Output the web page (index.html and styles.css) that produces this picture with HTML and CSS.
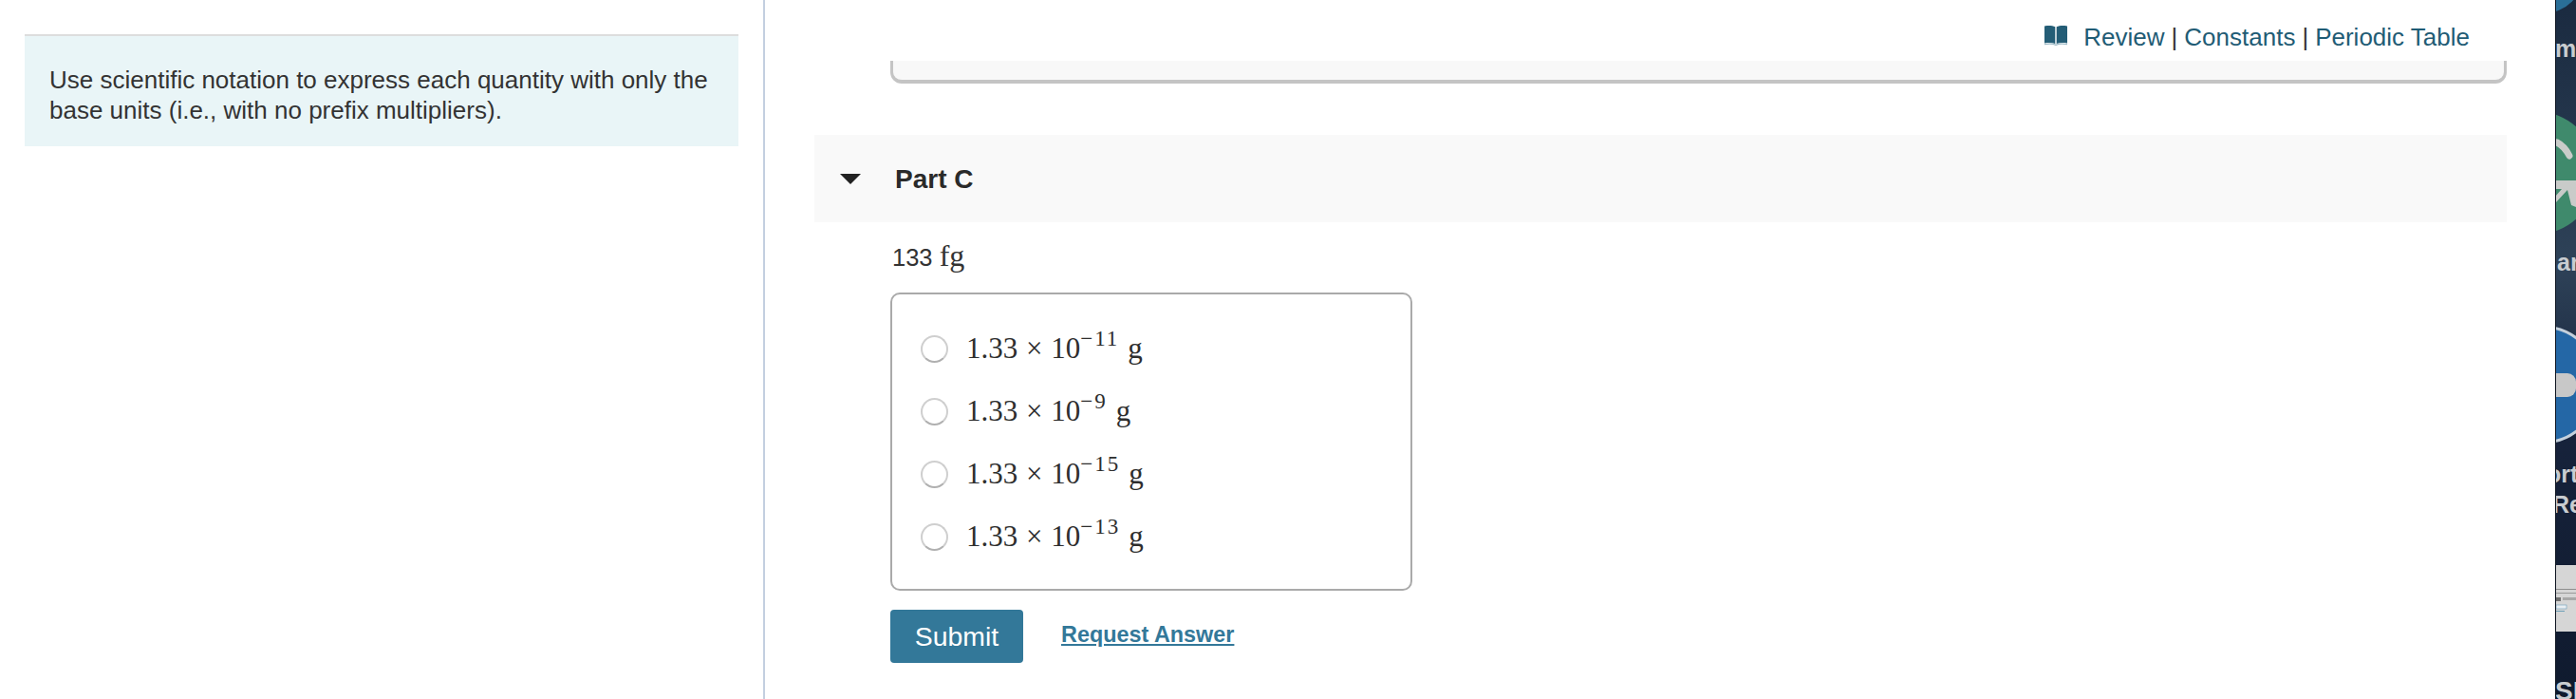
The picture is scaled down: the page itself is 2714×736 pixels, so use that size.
FILE: index.html
```html
<!DOCTYPE html>
<html lang="en">
<head>
<meta charset="utf-8">
<title>Part C</title>
<link rel="stylesheet" href="styles.css">
</head>
<body>
<div class="app">
  <aside class="intro">
    <div class="note">Use scientific notation to express each quantity with only the base units (i.e., with no prefix multipliers).</div>
  </aside>
  <main class="content">
    <nav class="links">
      <svg class="book" viewBox="0 0 24 21" width="24" height="21" aria-hidden="true">
        <path d="M0 0.5 C4 -0.2 8 -0.2 11.3 1.2 V19 C8 17.8 4 17.8 0 18.5 Z" fill="#245d76"/>
        <path d="M24 0.5 C20 -0.2 16 -0.2 12.7 1.2 V19 C16 17.8 20 17.8 24 18.5 Z" fill="#245d76"/>
        <path d="M0 19.6 C4 18.9 9 18.9 12 20.4 C15 18.9 20 18.9 24 19.6" fill="none" stroke="#9dbac6" stroke-width="1.2"/>
      </svg>
      <a class="link" href="#">Review</a><span class="sep">|</span><a class="link" href="#">Constants</a><span class="sep">|</span><a class="link" href="#">Periodic Table</a>
    </nav>
    <div class="prev-card"></div>
    <section class="part">
      <header class="part-head">
        <span class="caret"></span>
        <h2 class="part-title">Part C</h2>
      </header>
      <div class="part-body">
        <p class="quantity">133 <span class="serif">fg</span></p>
        <div class="options">
          <label class="option"><span class="radio"></span><span class="math">1.33 <span class="times">×</span> 10<span class="exp">−11</span><span class="unit">g</span></span></label>
          <label class="option"><span class="radio"></span><span class="math">1.33 <span class="times">×</span> 10<span class="exp">−9</span><span class="unit">g</span></span></label>
          <label class="option"><span class="radio"></span><span class="math">1.33 <span class="times">×</span> 10<span class="exp">−15</span><span class="unit">g</span></span></label>
          <label class="option"><span class="radio"></span><span class="math">1.33 <span class="times">×</span> 10<span class="exp">−13</span><span class="unit">g</span></span></label>
        </div>
        <div class="actions">
          <button class="submit" type="button">Submit</button>
          <a class="request" href="#">Request Answer</a>
        </div>
      </div>
    </section>
  </main>
  <div class="desktop">
    <svg class="desktop-art" viewBox="0 0 22 736" width="22" height="736" aria-hidden="true">
      <defs>
        <linearGradient id="wall" x1="0" y1="0" x2="0" y2="1">
          <stop offset="0" stop-color="#1a2a40"/>
          <stop offset="0.38" stop-color="#2e4258"/>
          <stop offset="0.6" stop-color="#17233c"/>
          <stop offset="1" stop-color="#0f1a2e"/>
        </linearGradient>
      </defs>
      <rect width="22" height="736" fill="url(#wall)"/>
      <circle cx="-12" cy="-28" r="42" fill="#2a6f98"/>
      <text class="desk-label" x="0" y="60">m</text>
      <circle cx="-21" cy="182" r="65" fill="#3f8a6c"/>
      <path d="M2 150 C8 153 12 158 15 164" fill="none" stroke="#c9ccc9" stroke-width="7" stroke-linecap="round"/>
      <path d="M0 190 H22 V218 L17 216 L13 200 L1 213 L0 207 L7 199 H0 Z" fill="#c9cbc9"/>
      <text class="desk-label" x="2" y="285">ar</text>
      <circle cx="-14" cy="405" r="61" fill="#2467a6" stroke="#c4d0dc" stroke-width="3"/>
      <rect x="-10" y="393" width="32" height="25" rx="9" fill="#c8c8c8"/>
      <text class="desk-label" x="-9" y="508">ort</text>
      <text class="desk-label" x="-3" y="540">Re</text>
      <rect y="595" width="22" height="70" fill="#d6d6d6"/>
      <rect y="620" x="1" width="21" height="1" fill="#8d8d8d"/>
      <rect y="624" x="1" width="21" height="1" fill="#9a9a9a"/>
      <rect y="629" x="1" width="5" height="4" fill="#707070"/>
      <rect y="629" x="8" width="14" height="3" fill="#a9a9a9"/>
      <rect y="637" x="1" width="11" height="4" fill="#e8eef2" stroke="#6d9fb8" stroke-width="0.6"/>
      <rect y="643" x="1" width="9" height="1" fill="#6d9fb8"/>
      <text class="desk-label desk-large" x="0" y="737">SH</text>
      <rect width="1" height="736" fill="#0d1420"/>
    </svg>
  </div>
</div>
</body>
</html>
```
FILE: styles.css
```css
* { box-sizing: border-box; }
html, body { margin: 0; padding: 0; background: #fff; }
body { font-family: "Liberation Sans", Arial, sans-serif; color: #333; }

.app { display: flex; width: 2714px; height: 736px; overflow: hidden; }

.intro {
  flex: 0 0 806px;
  padding: 36px 26px 0;
  border-right: 2px solid #c3cfe0;
}
.note {
  height: 118px;
  padding: 30px 26px 0 26px;
  background: #e9f5f7;
  border-top: 2px solid #dddddd;
  font-size: 26px;
  line-height: 32px;
}

.content { flex: 1; display: flex; flex-direction: column; min-width: 0; }

.links {
  height: 64px;
  padding: 0 90px 10px 0;
  display: flex;
  justify-content: flex-end;
  align-items: flex-end;
  font-size: 26px;
  line-height: 30px;
}
.book { margin: 0 17px 6px 0; }
.link { color: #1f5c75; text-decoration: none; }
.sep { margin: 0 7px; color: #333; }

.prev-card {
  height: 24px;
  margin: 0 51px 0 132px;
  background: #f8f8f8;
  border: solid #c4c4c4;
  border-width: 0 3px 4px;
  border-radius: 0 0 12px 12px;
}

.part { margin: 54px 51px 0 52px; }
.part-head {
  height: 92px;
  padding-left: 27px;
  display: flex;
  align-items: center;
  background: #f9f9f9;
}
.caret {
  width: 0;
  height: 0;
  border: solid transparent;
  border-width: 11px 11px 0;
  border-top-color: #222;
}
.part-title { margin: 2px 0 0 36px; font-size: 28px; font-weight: 700; color: #2a2a2a; }

.part-body { padding: 17px 0 0 80px; }
.quantity { margin: 0; height: 57px; padding-left: 2px; font-size: 25.5px; line-height: 36px; }
.serif { font-family: "Liberation Serif", "Times New Roman", serif; font-size: 32px; }

.options {
  width: 550px;
  height: 314px;
  padding: 24px 0 0 30px;
  border: 2px solid #aaa;
  border-radius: 10px;
}
.option { height: 66px; display: flex; align-items: center; }
.radio {
  flex: none;
  width: 29px;
  height: 29px;
  border: 2px solid #cfcfcf;
  border-bottom-color: #b0b0b0;
  border-radius: 50%;
  background: #fff;
}
.math {
  margin-left: 19px;
  font-family: "Liberation Serif", "Times New Roman", serif;
  font-size: 31px;
  line-height: 40px;
  white-space: nowrap;
  color: #2e2e2e;
}
.times { margin: 0 1px; }
.exp { font-size: 23px; letter-spacing: 2px; vertical-align: 13px; line-height: 0; }
.unit { margin-left: 9px; }

.actions { margin-top: 20px; display: flex; align-items: flex-start; }
.submit {
  width: 140px;
  height: 56px;
  padding: 0;
  border: 0;
  border-radius: 4px;
  background: #337899;
  color: #fff;
  font: 28.4px "Liberation Sans", Arial, sans-serif;
}
.request {
  margin: 11px 0 0 40px;
  color: #337899;
  font-size: 23.4px;
  line-height: 30px;
  font-weight: 700;
  text-decoration: underline;
}

.desktop { flex: 0 0 22px; height: 736px; }
.desktop-art { display: block; }
.desk-label { font-family: "Liberation Sans", Arial, sans-serif; font-size: 25px; font-weight: 700; fill: #c8ccd0; }
.desk-large { font-size: 28px; }
```
